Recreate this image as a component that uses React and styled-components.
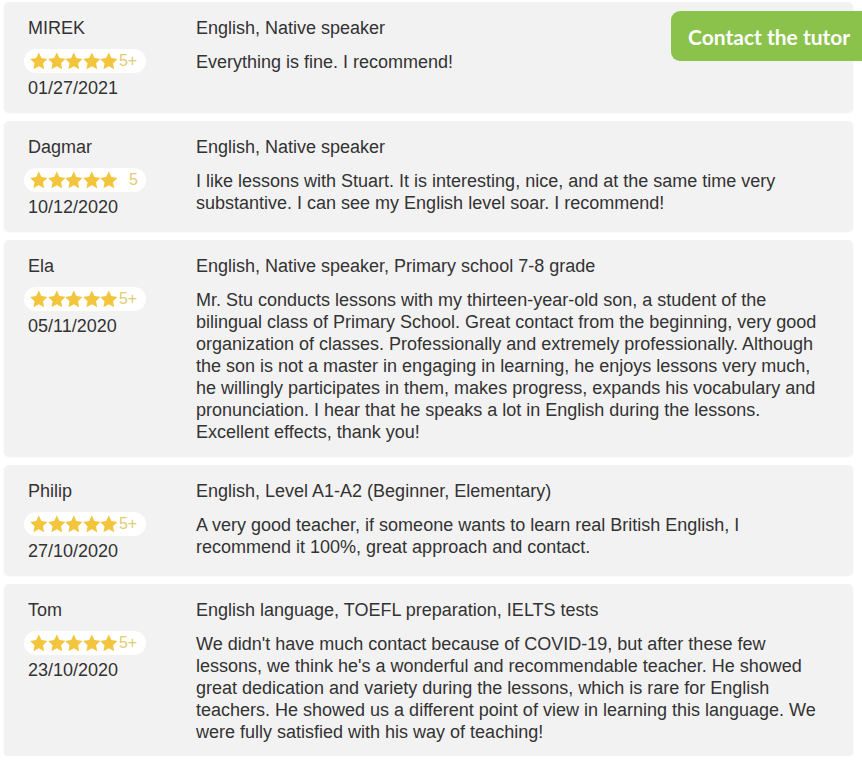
import React from 'react';
import styled, { createGlobalStyle } from 'styled-components';

const GlobalStyle = createGlobalStyle`
  html, body {
    margin: 0;
    padding: 0;
    background: #ffffff;
    overflow-x: hidden;
  }
`;

const Page = styled.div`
  position: relative;
  display: flex;
  flex-direction: column;
  gap: 9px;
  padding: 2px 9px 0 4px;
  font-family: 'Liberation Sans', Arial, sans-serif;
  color: #333333;
`;

const Card = styled.div`
  display: flex;
  flex-direction: row;
  padding: 15px 24px 13px 24px;
  background: #f2f2f2;
  border-radius: 5px;
  box-shadow: 0 1px 2px rgba(0, 0, 0, 0.07);
`;

const Side = styled.div`
  display: flex;
  flex-direction: column;
  align-items: flex-start;
  width: 168px;
  flex-shrink: 0;
`;

const Line = styled.div`
  font-size: 18px;
  line-height: 22px;
`;

const Pill = styled.div`
  display: flex;
  align-items: center;
  margin: 10px 0 4px -4px;
  padding: 0 0 0 6px;
  width: 116px;
  height: 24px;
  background: #ffffff;
  border-radius: 12px;
`;

const Stars = styled.div`
  display: flex;
  gap: 0;
`;

const Score = styled.span`
  margin-left: ${(p) => (p.$spaced ? '11px' : '1px')};
  font-size: 16px;
  line-height: 16px;
  color: #e3cb72;
`;

const Main = styled.div`
  display: flex;
  flex-direction: column;
  gap: 12px;
  flex: 1;
`;

const Body = styled.p`
  margin: 0;
  font-size: 18px;
  line-height: 22px;
`;

const ContactButton = styled.button`
  position: absolute;
  top: 11px;
  left: 671px;
  height: 50px;
  padding: 0 24px 0 17px;
  border: none;
  border-radius: 9px;
  background: #8bc24c;
  color: #ffffff;
  font-family: 'Lato', 'Noto Sans', sans-serif;
  font-weight: 700;
  font-size: 21px;
  white-space: nowrap;
  cursor: pointer;
`;

const Star = () => (
  <svg width="17.6" height="18" viewBox="0 0 22 22">
    <path
      fill="#f2c53d"
      d="M11 0.5l3.3 6.9 7.5 1-5.5 5.3 1.4 7.6L11 17.6l-6.7 3.7 1.4-7.6L0.2 8.4l7.5-1z"
    />
  </svg>
);

const reviews = [
  {
    name: 'MIREK',
    score: '5+',
    date: '01/27/2021',
    title: 'English, Native speaker',
    text: 'Everything is fine. I recommend!',
  },
  {
    name: 'Dagmar',
    score: '5',
    date: '10/12/2020',
    title: 'English, Native speaker',
    text: 'I like lessons with Stuart. It is interesting, nice, and at the same time very substantive. I can see my English level soar. I recommend!',
  },
  {
    name: 'Ela',
    score: '5+',
    date: '05/11/2020',
    title: 'English, Native speaker, Primary school 7-8 grade',
    text: 'Mr. Stu conducts lessons with my thirteen-year-old son, a student of the bilingual class of Primary School. Great contact from the beginning, very good organization of classes. Professionally and extremely professionally. Although the son is not a master in engaging in learning, he enjoys lessons very much, he willingly participates in them, makes progress, expands his vocabulary and pronunciation. I hear that he speaks a lot in English during the lessons. Excellent effects, thank you!',
  },
  {
    name: 'Philip',
    score: '5+',
    date: '27/10/2020',
    title: 'English, Level A1-A2 (Beginner, Elementary)',
    text: 'A very good teacher, if someone wants to learn real British English, I recommend it 100%, great approach and contact.',
  },
  {
    name: 'Tom',
    score: '5+',
    date: '23/10/2020',
    title: 'English language, TOEFL preparation, IELTS tests',
    text: "We didn't have much contact because of COVID-19, but after these few lessons, we think he's a wonderful and recommendable teacher. He showed great dedication and variety during the lessons, which is rare for English teachers. He showed us a different point of view in learning this language. We were fully satisfied with his way of teaching!",
  },
];

const App = () => (
  <>
    <GlobalStyle />
    <Page>
      {reviews.map((r, index) => (
        <Card key={index}>
          <Side>
            <Line>{r.name}</Line>
            <Pill>
              <Stars>
                {[0, 1, 2, 3, 4].map((i) => (
                  <Star key={i} />
                ))}
              </Stars>
              <Score $spaced={r.score === '5'}>{r.score}</Score>
            </Pill>
            <Line>{r.date}</Line>
          </Side>
          <Main>
            <Line>{r.title}</Line>
            <Body>{r.text}</Body>
          </Main>
        </Card>
      ))}
      <ContactButton>Contact the tutor</ContactButton>
    </Page>
  </>
);

export default App;
